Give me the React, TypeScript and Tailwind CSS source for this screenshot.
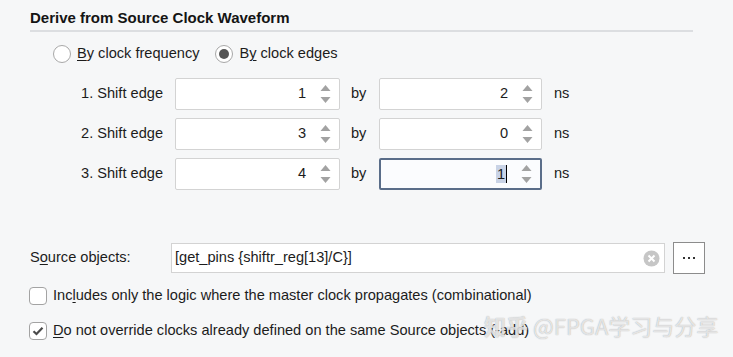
import React from "react";

const font = { fontFamily: '"Liberation Sans", Arial, "Noto Sans CJK SC", sans-serif' };

function Spinner() {
  return (
    <div className="flex flex-col items-center gap-[6px] mr-[8px]">
      <svg width="11" height="6" viewBox="0 0 11 6">
        <path d="M5.5 0 L10.5 6 L0.5 6 Z" fill="#a2a2a2" />
      </svg>
      <svg width="11" height="6" viewBox="0 0 11 6">
        <path d="M0.5 0 L10.5 0 L5.5 6 Z" fill="#a2a2a2" />
      </svg>
    </div>
  );
}

function SpinBox({ value, width, focused }: { value: string; width: string; focused?: boolean }) {
  return (
    <div
      className={
        "flex items-center h-[32px] rounded-[2px] " +
        width +
        (focused ? " border-2 border-[#5a6d89] bg-[#fbfcfe]" : " border border-[#d3d3d3] bg-white")
      }
    >
      <div className="flex-1 flex justify-end items-center pr-[14px]">
        {focused ? (
          <span className="flex items-center">
            <span className="bg-[#c9d3e6] leading-[18px] px-[1px]">{value}</span>
            <span className="w-[1px] h-[18px] bg-black" />
          </span>
        ) : (
          <span>{value}</span>
        )}
      </div>
      <Spinner />
    </div>
  );
}

function Row({ label, a, b, focused }: { label: string; a: string; b: string; focused?: boolean }) {
  return (
    <div className="flex items-center h-[32px]">
      <div className="w-[133px] text-right">{label}</div>
      <div className="ml-[12px]">
        <SpinBox value={a} width="w-[165px]" />
      </div>
      <div className="ml-[11px] w-[28px]">by</div>
      <SpinBox value={b} width="w-[163px]" focused={focused} />
      <div className="ml-[12px]">ns</div>
    </div>
  );
}

function Checkbox({ checked }: { checked?: boolean }) {
  return (
    <div className="w-[18px] h-[18px] rounded-[4px] border border-[#a3a3a3] bg-white flex items-center justify-center">
      {checked && (
        <svg width="12" height="10" viewBox="0 0 12 10">
          <path d="M1.5 5.2 L4.5 8 L10.5 1.8" stroke="#4a4a4a" strokeWidth="2.2" fill="none" />
        </svg>
      )}
    </div>
  );
}

export default function App() {
  return (
    <div
      className="relative w-[733px] h-[357px] overflow-hidden bg-[#f6f7f8] text-[14.6px] text-[#1c1c1c]"
      style={font}
    >
      {/* Header */}
      <div className="ml-[30px] w-[663px] h-[32px] pt-[9px] border-b-2 border-[#dcdee1]">
        <div className="font-bold text-[15px] leading-[18px] text-[#141414]">Derive from Source Clock Waveform</div>
      </div>

      {/* Radios */}
      <div className="flex items-center h-[20px] mt-[12px] ml-[53px]">
        <div className="w-[18px] h-[18px] rounded-full border border-[#a8a8a8] bg-white" />
        <div className="ml-[6px]">
          <span className="underline underline-offset-2">B</span>y clock frequency
        </div>
        <div className="ml-[16px] w-[18px] h-[18px] rounded-full border border-[#a8a8a8] bg-white flex items-center justify-center">
          <div className="w-[10px] h-[10px] rounded-full bg-[#555]" />
        </div>
        <div className="ml-[6px]">
          B<span className="underline underline-offset-2">y</span> clock edges
        </div>
      </div>

      {/* Shift edges */}
      <div className="flex flex-col gap-[8px] mt-[14px] ml-[30px]">
        <Row label="1. Shift edge" a="1" b="2" />
        <Row label="2. Shift edge" a="3" b="0" />
        <Row label="3. Shift edge" a="4" b="1" focused />
      </div>

      {/* Source objects */}
      <div className="flex items-center h-[32px] mt-[52px] ml-[30px]">
        <div className="w-[141px]">
          S<span className="underline underline-offset-2">o</span>urce objects:
        </div>
        <div className="w-[494px] h-[30px] border border-[#d3d3d3] bg-white flex items-center pl-[3px] pr-[4px]">
          <span className="flex-1">[get_pins {"{"}shiftr_reg[13]/C{"}"}]</span>
          <svg width="17" height="17" viewBox="0 0 17 17">
            <circle cx="8.5" cy="8.5" r="8" fill="#c6c6c6" />
            <path d="M5.5 5.5 L11.5 11.5 M11.5 5.5 L5.5 11.5" stroke="white" strokeWidth="2" />
          </svg>
        </div>
        <div className="ml-[8px] w-[32px] h-[32px] border border-[#8c8c8c] bg-white flex items-center justify-center gap-[3px]">
          <span className="w-[2px] h-[2px] bg-[#333]" />
          <span className="w-[2px] h-[2px] bg-[#333]" />
          <span className="w-[2px] h-[2px] bg-[#333]" />
        </div>
      </div>

      {/* Checkboxes */}
      <div className="flex items-center h-[20px] mt-[12px] ml-[29px]">
        <Checkbox />
        <div className="ml-[6px]">
          Inc<span className="underline underline-offset-2">l</span>udes only the logic where the master clock propagates (combinational)
        </div>
      </div>
      <div className="flex items-center h-[20px] mt-[15px] ml-[29px]">
        <Checkbox checked />
        <div className="ml-[6px]">
          <span className="underline underline-offset-2">D</span>o not override clocks already defined on the same Source objects (-add)
        </div>
      </div>

      {/* Watermark */}
      <div
        className="absolute left-[484px] top-[310px] text-[22px] leading-[30px] text-white/70 whitespace-nowrap pointer-events-none"
        style={{
          fontFamily: '"Noto Sans CJK SC", "Liberation Sans", sans-serif',
          textShadow: "0 0 1px rgba(120,120,120,0.7)",
        }}
      >
        <span className="font-bold">知乎</span> @FPGA学习与分享
      </div>
    </div>
  );
}
